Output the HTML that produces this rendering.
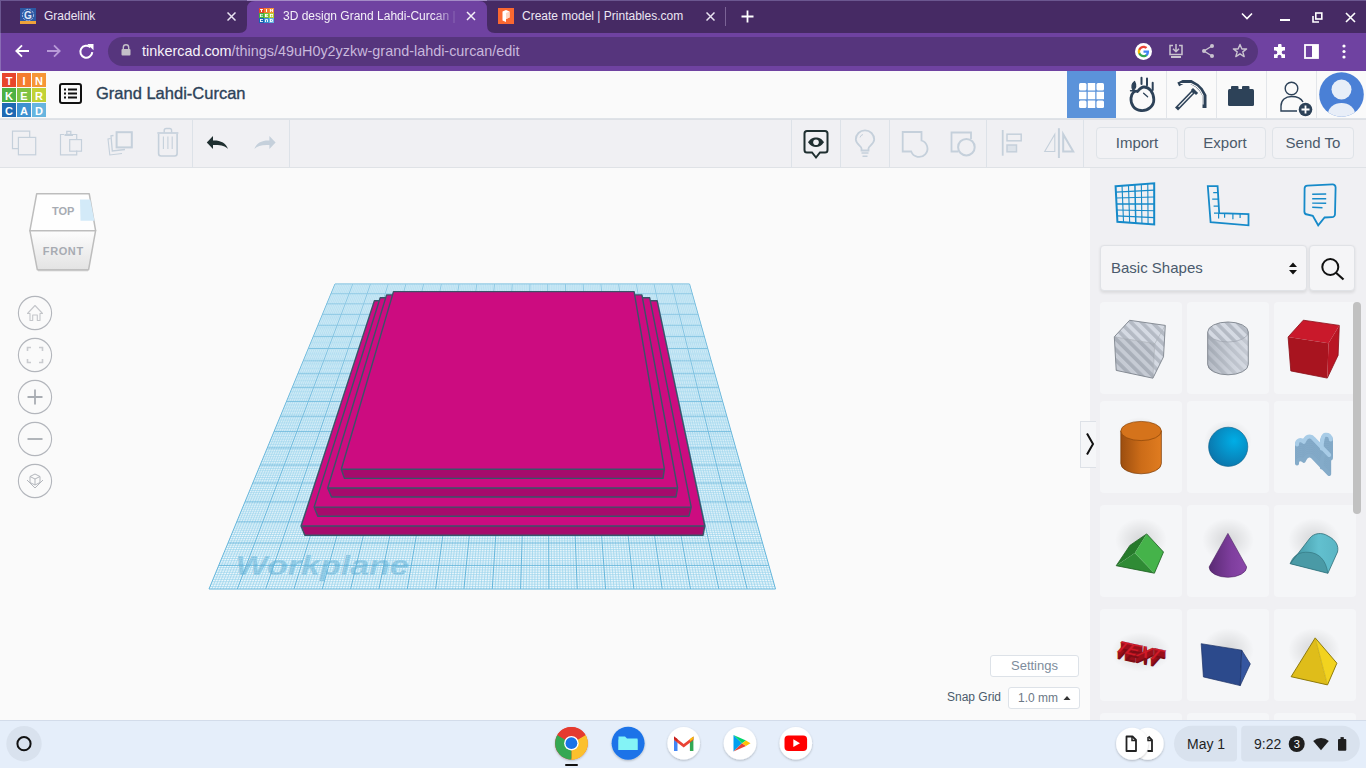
<!DOCTYPE html>
<html><head><meta charset="utf-8">
<style>
*{margin:0;padding:0;box-sizing:border-box}
html,body{width:1366px;height:768px;overflow:hidden;background:#fafafa;font-family:"Liberation Sans",sans-serif}
.a{position:absolute}
#tabs{left:0;top:0;width:1366px;height:33px;background:#462a64;border-top:1px solid #6e559a}
#tb{left:0;top:33px;width:1366px;height:38px;background:#6f42a1}
.tab{top:0;height:33px;color:#fff;font-size:12.5px}
.tabt{position:absolute;top:9px;white-space:nowrap;color:#f1ecf6}
.x{position:absolute;top:9px;width:14px;height:14px}
#omni{left:108px;top:37px;width:1150px;height:29px;border-radius:15px;background:#56357d}
#hdr{left:0;top:71px;width:1366px;height:48px;background:#fafafa}
#tool{left:0;top:119px;width:1366px;height:49px;background:#f0f0f3;border-top:1px solid #dde0e5;border-bottom:1px solid #dfe2e6}
#canvas{left:0;top:168px;width:1090px;height:552px;background:#fafafa}
#panel{left:1090px;top:168px;width:276px;height:552px;background:#f0f0f3}
#shelf{left:0;top:720px;width:1366px;height:48px;background:#e5eefa;border-top:1px solid #d3dcea}
.btn{width:82px;height:32px;border:1px solid #dfe3e8;border-radius:4px;background:#f2f2f5;color:#4b5a6b;font-size:15px;text-align:center;line-height:30px}
.card{width:82px;height:92px;background:#f5f6f8;border-radius:4px}
</style></head><body>

<div id="tabs" class="a"></div>
<svg class="a" style="left:0;top:0" width="1366" height="33">
<rect x="0" y="0" width="1366" height="1" fill="#6b5790"/>
<rect x="0" y="0" width="1" height="33" fill="#6b5790"/>
<path d="M239 33 Q247 33 247 25 L247 9 Q247 1 255 1 L479 1 Q487 1 487 9 L487 25 Q487 33 495 33 Z" fill="#6f42a1"/>
<rect x="247" y="0" width="240" height="1" fill="#a38bc6"/>
<rect x="725" y="7" width="1" height="19" fill="#7b6396"/>
</svg>
<!-- tab 1 -->
<svg class="a" style="left:20px;top:8px" width="16" height="16" viewBox="0 0 16 16">
<rect width="16" height="16" fill="#2c58a3"/><rect y="13" width="16" height="3" fill="#eea23a"/>
<circle cx="8" cy="7" r="5.6" fill="none" stroke="#a9c0ea" stroke-width="1" stroke-dasharray="2 1"/>
<text x="8" y="10.5" font-size="10" font-weight="bold" text-anchor="middle" fill="#dfe8f8" font-family="Liberation Sans">G</text>
</svg>
<div class="a tabt" style="left:44px;top:9px;font-size:12px;color:#ece6f3">Gradelink</div>
<svg class="a" style="left:227px;top:12px" width="9" height="9"><path d="M0.5 0.5L8.5 8.5M8.5 0.5L0.5 8.5" stroke="#e8e2f0" stroke-width="1.5"/></svg>
<!-- tab 2 -->
<svg class="a" style="left:259px;top:8px" width="15" height="15" viewBox="0 0 15 15">
<rect x="0" y="0" width="5" height="5" fill="#e8452c"/><rect x="5" y="0" width="5" height="5" fill="#f47c30"/><rect x="10" y="0" width="5" height="5" fill="#f59137"/>
<rect x="0" y="5" width="5" height="5" fill="#3fae3e"/><rect x="5" y="5" width="5" height="5" fill="#7cc03a"/><rect x="10" y="5" width="5" height="5" fill="#b5cf2e"/>
<rect x="0" y="10" width="5" height="5" fill="#1565b5"/><rect x="5" y="10" width="5" height="5" fill="#3a8fd0"/><rect x="10" y="10" width="5" height="5" fill="#62b3e0"/>
<g fill="#fff">
<rect x="1" y="1" width="3" height="0.9"/><rect x="2" y="1" width="1" height="3"/>
<rect x="7" y="1" width="1" height="3"/>
<rect x="11" y="1" width="0.9" height="3"/><rect x="13.1" y="1" width="0.9" height="3"/><rect x="11.5" y="1.8" width="1.6" height="0.9"/>
<rect x="1" y="6" width="0.9" height="3"/><rect x="2.4" y="6" width="1.2" height="1.2"/><rect x="2.4" y="7.8" width="1.2" height="1.2"/>
<rect x="6" y="6" width="3" height="0.8"/><rect x="6" y="6" width="0.9" height="3"/><rect x="6" y="7.2" width="2.4" height="0.7"/><rect x="6" y="8.2" width="3" height="0.8"/>
<rect x="11" y="6" width="0.9" height="3"/><rect x="11" y="6" width="2.6" height="0.8"/><rect x="13" y="6" width="0.9" height="1.6"/><rect x="12.6" y="7.8" width="1.2" height="1.2"/>
<rect x="1" y="11" width="3" height="0.8"/><rect x="1" y="11" width="0.9" height="3"/><rect x="1" y="13.2" width="3" height="0.8"/>
<rect x="6" y="11.5" width="0.9" height="2.5"/><rect x="8.1" y="11.5" width="0.9" height="2.5"/><rect x="6.5" y="11" width="2" height="0.8"/>
<rect x="11" y="11" width="0.9" height="3"/><rect x="11" y="11" width="2.4" height="0.8"/><rect x="11" y="13.2" width="2.4" height="0.8"/><rect x="13.1" y="11.6" width="0.9" height="1.8"/>
</g>
</svg>
<div class="a" style="left:283px;top:9px;width:176px;height:18px;overflow:hidden;font-size:12px;color:#f4f0f8;white-space:nowrap;-webkit-mask-image:linear-gradient(90deg,#000 150px,transparent 176px)">3D design Grand Lahdi-Curcan | Tinkercad</div>
<svg class="a" style="left:466px;top:11px" width="10" height="10"><path d="M1 1L9 9M9 1L1 9" stroke="#f4f0f8" stroke-width="1.5"/></svg>
<!-- tab 3 -->
<svg class="a" style="left:498px;top:8px" width="16" height="16" viewBox="0 0 16 16">
<rect width="16" height="16" fill="#fa6831"/>
<path d="M4.5 3.5 L8 2 L11.5 3.5 L11.5 9.5 L8 11 L8 14 L4.5 12.5 Z" fill="#fff"/>
<path d="M8 5 L11.5 3.5 L11.5 9.5 L8 11 Z" fill="#ffd5c0"/>
</svg>
<div class="a" style="left:522px;top:9px;font-size:12px;color:#ece6f3;white-space:nowrap">Create model | Printables.com</div>
<svg class="a" style="left:706px;top:12px" width="9" height="9"><path d="M0.5 0.5L8.5 8.5M8.5 0.5L0.5 8.5" stroke="#e8e2f0" stroke-width="1.5"/></svg>
<svg class="a" style="left:741px;top:10px" width="13" height="13"><path d="M6.5 0.5V12.5M0.5 6.5H12.5" stroke="#fff" stroke-width="1.8"/></svg>
<!-- window controls -->
<svg class="a" style="left:1241px;top:12px" width="12" height="8"><path d="M1 1.5L6 6.5L11 1.5" fill="none" stroke="#fff" stroke-width="1.6"/></svg>
<svg class="a" style="left:1280px;top:19px" width="11" height="3"><rect width="10" height="2" fill="#fff"/></svg>
<svg class="a" style="left:1312px;top:12px" width="11" height="11"><path d="M1 4V10H7" fill="none" stroke="#fff" stroke-width="1.6"/><rect x="3.8" y="1" width="6" height="6" fill="none" stroke="#fff" stroke-width="1.6"/></svg>
<svg class="a" style="left:1344.5px;top:11.5px" width="11" height="11"><path d="M1 1L10 10M10 1L1 10" stroke="#fff" stroke-width="1.6"/></svg>
<div id="tb" class="a"></div>
<div class="a" style="left:0;top:33px;width:1px;height:38px;background:#8a6cb5"></div>
<div id="omni" class="a"></div>
<!-- nav buttons -->
<svg class="a" style="left:14px;top:43px" width="16" height="16" viewBox="0 0 16 16"><path d="M15 8H2.5M8 2.3L2.3 8L8 13.7" fill="none" stroke="#fff" stroke-width="1.8"/></svg>
<svg class="a" style="left:46px;top:43px" width="16" height="16" viewBox="0 0 16 16"><path d="M1 8H13.5M8 2.3L13.7 8L8 13.7" fill="none" stroke="#b89ad8" stroke-width="1.8"/></svg>
<svg class="a" style="left:78px;top:43px" width="17" height="17" viewBox="0 0 17 17"><path d="M14.3 9.2A6 6 0 1 1 12.4 4.3" fill="none" stroke="#fff" stroke-width="2"/><path d="M9.2 1H15.5V7.3Z" fill="#fff"/></svg>
<svg class="a" style="left:121px;top:44px" width="10" height="12" viewBox="0 0 10 12"><path d="M2.3 5V3.5A2.7 2.7 0 0 1 7.7 3.5V5" fill="none" stroke="#c4c0c8" stroke-width="1.4"/><rect x="0.5" y="5" width="9" height="6.5" rx="1" fill="#c4c0c8"/></svg>
<div class="a" style="left:142px;top:42.7px;font-size:14.4px;white-space:nowrap;color:#c8b8dc"><span style="color:#f6f2fa">tinkercad.com</span>/things/49uH0y2yzkw-grand-lahdi-curcan/edit</div>
<!-- omnibox right icons -->
<svg class="a" style="left:1135px;top:43px" width="17" height="17" viewBox="0 0 17 17"><circle cx="8.5" cy="8.5" r="8.5" fill="#fff"/><g transform="translate(8.5,8.5) scale(1.35) translate(-8.5,-8.5)">
<path d="M12.6 8.6c0-.3 0-.6-.1-.9H8.5v1.7h2.3c-.1.5-.4 1-.9 1.3v1.1h1.4c.8-.8 1.3-1.9 1.3-3.2z" fill="#4285f4"/>
<path d="M8.5 12.8c1.2 0 2.1-.4 2.8-1l-1.4-1.1c-.4.3-.9.4-1.4.4-1.1 0-2.1-.8-2.4-1.8H4.7v1.1c.7 1.4 2.2 2.4 3.8 2.4z" fill="#34a853"/>
<path d="M6.1 9.3c-.1-.3-.1-.5-.1-.8s0-.5.1-.8V6.6H4.7c-.3.6-.5 1.2-.5 1.9s.2 1.3.5 1.9l1.4-1.1z" fill="#fbbc05"/>
<path d="M8.5 5.9c.6 0 1.2.2 1.6.6l1.2-1.2c-.8-.7-1.8-1.1-2.8-1.1-1.7 0-3.1 1-3.8 2.4l1.4 1.1c.3-1 1.3-1.8 2.4-1.8z" fill="#ea4335"/></g></svg>
<svg class="a" style="left:1168px;top:43px" width="16" height="16" viewBox="0 0 16 16"><path d="M5 2.5H2V11.5H14V2.5H11" fill="none" stroke="#c9c3cf" stroke-width="1.5"/><path d="M8 1V8.5M5 5.8L8 8.8L11 5.8" fill="none" stroke="#c9c3cf" stroke-width="1.5"/><rect x="3" y="13" width="10" height="2" fill="#c9c3cf"/></svg>
<svg class="a" style="left:1200px;top:43px" width="16" height="16" viewBox="0 0 16 16"><path d="M12 3L4 8L12 13" fill="none" stroke="#c9c3cf" stroke-width="1.4"/><circle cx="12" cy="3" r="2" fill="#c9c3cf"/><circle cx="4" cy="8" r="2" fill="#c9c3cf"/><circle cx="12" cy="13" r="2" fill="#c9c3cf"/></svg>
<svg class="a" style="left:1232px;top:43px" width="16" height="16" viewBox="0 0 16 16"><path d="M8 1.5L9.9 6H14.6L10.8 8.9L12.2 13.6L8 10.8L3.8 13.6L5.2 8.9L1.4 6H6.1Z" fill="none" stroke="#c9c3cf" stroke-width="1.4" stroke-linejoin="round"/></svg>
<svg class="a" style="left:1272px;top:44px" width="16" height="16" viewBox="0 0 16 16"><path d="M6 1.5a1.8 1.8 0 0 1 3.6 0V3H13V6.4H11.6a1.9 1.9 0 0 0 0 3.8H13V14H9.4V12.6a1.9 1.9 0 0 0-3.8 0V14H2V10.3H3.4a1.9 1.9 0 0 0 0-3.8H2V3H6Z" fill="#fff"/></svg>
<svg class="a" style="left:1304px;top:44px" width="16" height="15" viewBox="0 0 16 15"><rect x="1" y="1" width="13" height="13" fill="none" stroke="#fff" stroke-width="1.8"/><rect x="8" y="1" width="6" height="13" fill="#fff"/></svg>
<svg class="a" style="left:1342px;top:44px" width="4" height="15" viewBox="0 0 4 15"><circle cx="2" cy="2" r="1.6" fill="#fff"/><circle cx="2" cy="7.5" r="1.6" fill="#fff"/><circle cx="2" cy="13" r="1.6" fill="#fff"/></svg>

<div id="hdr" class="a"></div>
<!-- tinkercad logo -->
<svg class="a" style="left:2px;top:73px" width="44" height="44" viewBox="0 0 44 44" font-family="Liberation Sans" font-weight="bold" font-size="11" text-anchor="middle" fill="#fff">
<rect x="0" y="0" width="14" height="14" fill="#e8452c"/><rect x="15" y="0" width="14" height="14" fill="#f47c30"/><rect x="30" y="0" width="14" height="14" fill="#f69636"/>
<rect x="0" y="15" width="14" height="14" fill="#4cb144"/><rect x="15" y="15" width="14" height="14" fill="#7fc241"/><rect x="30" y="15" width="14" height="14" fill="#c2d236"/>
<rect x="0" y="30" width="14" height="14" fill="#1e69b3"/><rect x="15" y="30" width="14" height="14" fill="#3e91d0"/><rect x="30" y="30" width="14" height="14" fill="#67b5df"/>
<text x="7" y="11.5">T</text><text x="22" y="11.5">I</text><text x="37" y="11.5">N</text>
<text x="7" y="26.5">K</text><text x="22" y="26.5">E</text><text x="37" y="26.5">R</text>
<text x="7" y="41.5">C</text><text x="22" y="41.5">A</text><text x="37" y="41.5">D</text>
</svg>
<svg class="a" style="left:59px;top:83px" width="23" height="21" viewBox="0 0 23 21"><rect x="1" y="1" width="21" height="19" rx="2" fill="none" stroke="#111" stroke-width="2"/>
<rect x="5" y="5.5" width="2" height="2" fill="#111"/><rect x="9" y="5.5" width="9" height="2" fill="#111"/>
<rect x="5" y="9.5" width="2" height="2" fill="#111"/><rect x="9" y="9.5" width="9" height="2" fill="#111"/>
<rect x="5" y="13.5" width="2" height="2" fill="#111"/><rect x="9" y="13.5" width="9" height="2" fill="#111"/></svg>
<div class="a" style="left:96px;top:83.8px;font-size:16.5px;color:#2d4258;white-space:nowrap;-webkit-text-stroke:0.35px #2d4258">Grand Lahdi-Curcan</div>
<!-- header right icons -->
<div class="a" style="left:1067px;top:71px;width:49px;height:48px;background:#5b93da"></div>
<svg class="a" style="left:1079px;top:83px" width="25" height="25" viewBox="0 0 25 25" fill="#fff">
<rect x="0" y="0" width="7.5" height="7.5" rx="1.5"/><rect x="8.75" y="0" width="7.5" height="7.5"/><rect x="17.5" y="0" width="7.5" height="7.5" rx="1.5"/>
<rect x="0" y="8.75" width="7.5" height="7.5"/><rect x="8.75" y="8.75" width="7.5" height="7.5"/><rect x="17.5" y="8.75" width="7.5" height="7.5"/>
<rect x="0" y="17.5" width="7.5" height="7.5" rx="1.5"/><rect x="8.75" y="17.5" width="7.5" height="7.5"/><rect x="17.5" y="17.5" width="7.5" height="7.5" rx="1.5"/></svg>
<div class="a" style="left:1166px;top:71px;width:1px;height:48px;background:#e3e6ea"></div>
<div class="a" style="left:1216px;top:71px;width:1px;height:48px;background:#e3e6ea"></div>
<div class="a" style="left:1266px;top:71px;width:1px;height:48px;background:#e3e6ea"></div>
<div class="a" style="left:1316px;top:71px;width:1px;height:48px;background:#e3e6ea"></div>
<svg class="a" style="left:1066px;top:70px" width="150" height="48" viewBox="1066 70 150 48" fill="none" stroke="#2d4258" stroke-linecap="round" stroke-linejoin="round">
<path d="M1137.5 91.5C1135 90 1131.5 93 1131 98C1130.5 104 1134 110 1141 110.5C1148 111 1154 106 1153.8 99.5C1153.5 92 1149 87 1144 87C1141 87 1139.5 89 1137.5 91.5Z" stroke-width="2.8"/>
<path d="M1133.2 90.5C1131 87 1132 83.5 1134.6 81.5C1136.5 85 1136 88 1133.2 90.5Z" fill="#2d4258" stroke-width="1.2"/>
<path d="M1130.5 90.8H1137" stroke-width="1.4"/>
<path d="M1141.5 77.8V84M1147 78.5V85.2M1152.7 82.8V90" stroke-width="2"/>
<path d="M1143.6 93.2L1147.6 96.8" stroke-width="1.3"/>
<g stroke-linecap="square" stroke-linejoin="miter">
<path d="M1180 83.5L1183 82H1191L1197 85.5L1201 89.5L1204.5 95.5V106" stroke-width="4"/>
<path d="M1193 92L1178 107.5" stroke-width="4.2"/>
<path d="M1181 83.5H1191L1196.5 86.5L1200 90L1203 95.5V104" stroke="#fafafa" stroke-width="1.1"/>
<path d="M1192 93L1179 106.5" stroke="#fafafa" stroke-width="1.2"/>
<path d="M1193 90L1196 93" stroke-width="3"/>
</g>
</svg>
<svg class="a" style="left:1227px;top:85px" width="28" height="22" viewBox="0 0 28 22" fill="#2d4258">
<rect x="4" y="1" width="7.5" height="5" rx="1"/><rect x="15" y="1" width="7.5" height="5" rx="1"/><rect x="1" y="4" width="26" height="17" rx="1.5"/></svg>
<svg class="a" style="left:1280px;top:81px" width="34" height="37" viewBox="0 0 34 37" fill="none" stroke="#2d4258" stroke-width="1.4">
<circle cx="11.5" cy="7.5" r="6.3"/><path d="M23 21 C21 17 16.5 15.5 11.5 15.5 C5.5 15.5 1 19 1 25 V30 H17"/>
<circle cx="25.5" cy="28.5" r="6.8" fill="#2d4258" stroke="none"/><path d="M25.5 24.5V32.5M21.5 28.5H29.5" stroke="#fff" stroke-width="1.8"/></svg>
<svg class="a" style="left:1319px;top:72px" width="46" height="46" viewBox="0 0 46 46">
<defs><clipPath id="av"><circle cx="22.5" cy="22.5" r="22.3"/></clipPath></defs>
<circle cx="22.5" cy="22.5" r="22.3" fill="#4a80d6"/>
<g clip-path="url(#av)" fill="#e8eef8"><circle cx="22.5" cy="17.5" r="10"/><ellipse cx="22.5" cy="42" rx="13.5" ry="11"/></g></svg>
<div class="a" style="left:0;top:118px;width:1366px;height:1px;background:#dfe3e8"></div>

<div id="tool" class="a"></div>
<svg class="a" style="left:0;top:120px" width="1090" height="48" fill="none" stroke="#c5d0db" stroke-width="1.2">
<!-- copy -->
<path d="M18.4 28.6H12.5V11.2H29.7V17.4"/>
<rect x="18.4" y="17.4" width="17.3" height="17.4"/>
<!-- paste -->
<path d="M64 14.5H60.5V34.8H76.7V30.5M76.7 19.6V14.5H73"/>
<rect x="66.8" y="11.4" width="4" height="3" stroke-width="1.3"/><rect x="64.5" y="14" width="8.5" height="2" fill="#c5d0db" stroke="none"/>
<rect x="69.7" y="19.6" width="11.8" height="11.6"/>
<!-- duplicate -->
<rect x="116.6" y="12.2" width="15.2" height="15.2" stroke-width="2"/>
<path d="M113.5 15.5L111 15.8L112.3 31L125 29.5" stroke-width="1.3"/>
<path d="M110.6 18.5L108 19L109.8 35L122 33.5" stroke-width="1.1"/>
<!-- trash -->
<path d="M157.3 13H178.4" stroke-width="1.6"/><path d="M164.2 12.5V10.5A2 2 0 0 1 166.2 8.5H169.6A2 2 0 0 1 171.6 10.5V12.5" stroke-width="1.4"/>
<path d="M158.6 14V33.5A2.5 2.5 0 0 0 161.1 36H174.6A2.5 2.5 0 0 0 177.1 33.5V14" stroke-width="1.6"/>
<path d="M163.4 16.6V29M167.9 16.6V29M172.2 16.6V29" stroke-width="1.1"/>
<!-- separators -->
<path d="M192.5 0V48M289.5 0V48M791.5 0V48M840.5 0V48M889.5 0V48M986.5 0V48M1083.5 0V48" stroke="#dde2e8" stroke-width="1"/>
<!-- undo -->
<path d="M206.8 22.5L213 16V29Z" fill="#1f2f30" stroke="none"/>
<path d="M212 20.5C220 20 226 22.5 228 29C225 25.5 220 24.5 212 25Z" fill="#1f2f30" stroke="none"/>
<!-- redo -->
<path d="M275.6 22.5L269.4 16V29Z" fill="#c5d0db" stroke="none"/>
<path d="M270.4 20.5C262.4 20 256.4 22.5 254.4 29C257.4 25.5 262.4 24.5 270.4 25Z" fill="#c5d0db" stroke="none"/>
<!-- notes eye -->
<path d="M807 11H825A2.5 2.5 0 0 1 827.5 13.5V30A2.5 2.5 0 0 1 825 32.5H820L816 37.5L812 32.5H807A2.5 2.5 0 0 1 804.5 30V13.5A2.5 2.5 0 0 1 807 11Z" stroke="#1f2f30" stroke-width="2"/>
<path d="M808 22.3C810.5 18.5 813 17.5 816 17.5C819 17.5 821.5 18.5 824 22.3C821.5 26 819 27 816 27C813 27 810.5 26 808 22.3Z" fill="#1f2f30" stroke="none"/>
<circle cx="816" cy="22.3" r="2.8" fill="#f0f0f3" stroke="none"/>
<!-- bulb -->
<path d="M861.5 30.5V28.5C861.5 26 855.8 24 855.8 19.5A9.2 9.2 0 0 1 874.2 19.5C874.2 24 868.5 26 868.5 28.5V30.5Z" stroke-width="1.8"/>
<path d="M861.5 33H868.5M862.5 36.3H867.5" stroke-width="1.6"/>
<path d="M860 17.5A4 4 0 0 1 863 14.5" stroke-width="1"/>
<!-- group -->
<path d="M902.7 12H921.5V20.5A8.4 8.4 0 1 1 911.2 31.5H902.7Z" stroke-width="1.8"/>
<!-- subtract -->
<path d="M958.5 31.5H951.5V12.5H971V19" stroke-width="1.8"/>
<circle cx="966.4" cy="27.2" r="8.3" stroke-width="2"/>
<!-- align -->
<path d="M1002.7 10V35.7" stroke-width="1.8"/>
<rect x="1007" y="14.2" width="14.2" height="6.6" stroke-width="1.5"/>
<rect x="1007" y="25" width="9.5" height="6.8" fill="#dde3ea" stroke-width="1.5"/>
<!-- mirror -->
<path d="M1058.9 8.2V38" stroke-width="2"/>
<path d="M1054.8 14.2L1044.7 31.5H1054.8Z" stroke-width="1.1"/>
<path d="M1063.2 14.2L1073.2 31.5H1063.2Z" stroke-width="2"/>
</svg>
<div class="a btn" style="left:1096px;top:127px">Import</div>
<div class="a btn" style="left:1184px;top:127px">Export</div>
<div class="a btn" style="left:1272px;top:127px">Send To</div>

<div id="canvas" class="a"></div>
<svg class="a" style="left:0;top:0" width="1090" height="720">
<path d="M335 284L689.5 284L775.5 589L209 589Z" fill="#ecf7fc"/>
<text x="0" y="0" font-family="Liberation Sans" font-weight="bold" font-style="italic" font-size="27" fill="#74b6d8" fill-opacity="0.85" transform="translate(235.5,574.5) scale(1.26,1)">Workplane</text>
<path d="M336.77 284.00L211.83 589.00M334.61 284.96L689.77 284.96M338.55 284.00L214.66 589.00M334.21 285.92L690.04 285.92M340.32 284.00L217.50 589.00M333.81 286.88L690.31 286.88M342.09 284.00L220.33 589.00M333.41 287.85L690.58 287.85M343.86 284.00L223.16 589.00M333.01 288.82L690.86 288.82M345.63 284.00L225.99 589.00M332.61 289.79L691.13 289.79M347.41 284.00L228.83 589.00M332.20 290.77L691.41 290.77M349.18 284.00L231.66 589.00M331.80 291.75L691.69 291.75M350.95 284.00L234.49 589.00M331.39 292.74L691.96 292.74M354.50 284.00L240.16 589.00M330.57 294.72L692.52 294.72M356.27 284.00L242.99 589.00M330.16 295.71L692.80 295.71M358.04 284.00L245.82 589.00M329.75 296.72L693.09 296.72M359.81 284.00L248.66 589.00M329.33 297.72L693.37 297.72M361.59 284.00L251.49 589.00M328.92 298.73L693.65 298.73M363.36 284.00L254.32 589.00M328.50 299.74L693.94 299.74M365.13 284.00L257.15 589.00M328.08 300.76L694.22 300.76M366.90 284.00L259.99 589.00M327.66 301.78L694.51 301.78M368.68 284.00L262.82 589.00M327.23 302.80L694.80 302.80M372.22 284.00L268.48 589.00M326.38 304.86L695.38 304.86M374.00 284.00L271.31 589.00M325.95 305.90L695.67 305.90M375.77 284.00L274.15 589.00M325.52 306.94L695.97 306.94M377.54 284.00L276.98 589.00M325.09 307.98L696.26 307.98M379.31 284.00L279.81 589.00M324.66 309.03L696.56 309.03M381.08 284.00L282.65 589.00M324.23 310.08L696.85 310.08M382.86 284.00L285.48 589.00M323.79 311.14L697.15 311.14M384.63 284.00L288.31 589.00M323.35 312.20L697.45 312.20M386.40 284.00L291.14 589.00M322.91 313.26L697.75 313.26M389.95 284.00L296.81 589.00M322.03 315.41L698.36 315.41M391.72 284.00L299.64 589.00M321.58 316.48L698.66 316.48M393.49 284.00L302.47 589.00M321.13 317.56L698.96 317.56M395.26 284.00L305.31 589.00M320.69 318.65L699.27 318.65M397.04 284.00L308.14 589.00M320.23 319.74L699.58 319.74M398.81 284.00L310.97 589.00M319.78 320.84L699.89 320.84M400.58 284.00L313.80 589.00M319.33 321.94L700.20 321.94M402.36 284.00L316.63 589.00M318.87 323.04L700.51 323.04M404.13 284.00L319.47 589.00M318.41 324.15L700.82 324.15M407.67 284.00L325.13 589.00M317.49 326.38L701.45 326.38M409.44 284.00L327.96 589.00M317.03 327.50L701.77 327.50M411.22 284.00L330.80 589.00M316.56 328.63L702.08 328.63M412.99 284.00L333.63 589.00M316.10 329.76L702.40 329.76M414.76 284.00L336.46 589.00M315.63 330.89L702.72 330.89M416.53 284.00L339.30 589.00M315.16 332.03L703.04 332.03M418.31 284.00L342.13 589.00M314.68 333.18L703.37 333.18M420.08 284.00L344.96 589.00M314.21 334.33L703.69 334.33M421.85 284.00L347.79 589.00M313.73 335.48L704.02 335.48M425.40 284.00L353.46 589.00M312.77 337.80L704.67 337.80M427.17 284.00L356.29 589.00M312.29 338.97L705.00 338.97M428.94 284.00L359.12 589.00M311.81 340.15L705.33 340.15M430.72 284.00L361.95 589.00M311.32 341.32L705.66 341.32M432.49 284.00L364.79 589.00M310.83 342.51L706.00 342.51M434.26 284.00L367.62 589.00M310.34 343.70L706.33 343.70M436.03 284.00L370.45 589.00M309.85 344.89L706.67 344.89M437.81 284.00L373.29 589.00M309.35 346.09L707.01 346.09M439.58 284.00L376.12 589.00M308.85 347.29L707.35 347.29M443.12 284.00L381.78 589.00M307.85 349.71L708.03 349.71M444.89 284.00L384.61 589.00M307.35 350.93L708.37 350.93M446.67 284.00L387.45 589.00M306.84 352.16L708.72 352.16M448.44 284.00L390.28 589.00M306.34 353.38L709.06 353.38M450.21 284.00L393.11 589.00M305.83 354.62L709.41 354.62M451.99 284.00L395.95 589.00M305.31 355.86L709.76 355.86M453.76 284.00L398.78 589.00M304.80 357.10L710.11 357.10M455.53 284.00L401.61 589.00M304.28 358.35L710.47 358.35M457.30 284.00L404.44 589.00M303.76 359.61L710.82 359.61M460.85 284.00L410.11 589.00M302.72 362.14L711.53 362.14M462.62 284.00L412.94 589.00M302.20 363.41L711.89 363.41M464.39 284.00L415.77 589.00M301.67 364.69L712.25 364.69M466.16 284.00L418.61 589.00M301.14 365.97L712.61 365.97M467.94 284.00L421.44 589.00M300.61 367.26L712.98 367.26M469.71 284.00L424.27 589.00M300.07 368.55L713.34 368.55M471.48 284.00L427.10 589.00M299.53 369.85L713.71 369.85M473.25 284.00L429.94 589.00M298.99 371.16L714.08 371.16M475.03 284.00L432.77 589.00M298.45 372.47L714.44 372.47M478.57 284.00L438.43 589.00M297.36 375.11L715.19 375.11M480.35 284.00L441.26 589.00M296.81 376.44L715.56 376.44M482.12 284.00L444.10 589.00M296.26 377.77L715.94 377.77M483.89 284.00L446.93 589.00M295.71 379.11L716.32 379.11M485.66 284.00L449.76 589.00M295.15 380.46L716.70 380.46M487.44 284.00L452.60 589.00M294.59 381.81L717.08 381.81M489.21 284.00L455.43 589.00M294.03 383.17L717.46 383.17M490.98 284.00L458.26 589.00M293.47 384.53L717.85 384.53M492.75 284.00L461.09 589.00M292.90 385.90L718.23 385.90M496.30 284.00L466.76 589.00M291.76 388.66L719.01 388.66M498.07 284.00L469.59 589.00M291.19 390.05L719.40 390.05M499.84 284.00L472.42 589.00M290.61 391.45L719.80 391.45M501.62 284.00L475.25 589.00M290.03 392.85L720.19 392.85M503.39 284.00L478.09 589.00M289.45 394.26L720.59 394.26M505.16 284.00L480.92 589.00M288.87 395.67L720.99 395.67M506.93 284.00L483.75 589.00M288.28 397.09L721.39 397.09M508.70 284.00L486.58 589.00M287.69 398.52L721.79 398.52M510.48 284.00L489.42 589.00M287.10 399.96L722.20 399.96M514.02 284.00L495.08 589.00M285.90 402.84L723.01 402.84M515.80 284.00L497.92 589.00M285.30 404.30L723.42 404.30M517.57 284.00L500.75 589.00M284.70 405.76L723.83 405.76M519.34 284.00L503.58 589.00M284.09 407.23L724.25 407.23M521.11 284.00L506.41 589.00M283.48 408.70L724.66 408.70M522.88 284.00L509.25 589.00M282.87 410.18L725.08 410.18M524.66 284.00L512.08 589.00M282.26 411.67L725.50 411.67M526.43 284.00L514.91 589.00M281.64 413.17L725.92 413.17M528.20 284.00L517.74 589.00M281.02 414.67L726.34 414.67M531.75 284.00L523.41 589.00M279.77 417.70L727.20 417.70M533.52 284.00L526.24 589.00M279.14 419.22L727.63 419.22M535.29 284.00L529.07 589.00M278.51 420.75L728.06 420.75M537.06 284.00L531.90 589.00M277.87 422.29L728.49 422.29M538.84 284.00L534.74 589.00M277.23 423.83L728.93 423.83M540.61 284.00L537.57 589.00M276.59 425.39L729.37 425.39M542.38 284.00L540.40 589.00M275.95 426.95L729.81 426.95M544.15 284.00L543.23 589.00M275.30 428.52L730.25 428.52M545.93 284.00L546.07 589.00M274.65 430.09L730.69 430.09M549.47 284.00L551.73 589.00M273.34 433.27L731.59 433.27M551.25 284.00L554.57 589.00M272.68 434.86L732.04 434.86M553.02 284.00L557.40 589.00M272.01 436.47L732.49 436.47M554.79 284.00L560.23 589.00M271.35 438.08L732.95 438.08M556.56 284.00L563.06 589.00M270.68 439.71L733.40 439.71M558.34 284.00L565.89 589.00M270.00 441.34L733.86 441.34M560.11 284.00L568.73 589.00M269.33 442.97L734.33 442.97M561.88 284.00L571.56 589.00M268.65 444.62L734.79 444.62M563.65 284.00L574.39 589.00M267.96 446.27L735.26 446.27M567.20 284.00L580.06 589.00M266.59 449.61L736.20 449.61M568.97 284.00L582.89 589.00M265.89 451.29L736.67 451.29M570.74 284.00L585.72 589.00M265.19 452.97L737.14 452.97M572.51 284.00L588.56 589.00M264.49 454.67L737.62 454.67M574.29 284.00L591.39 589.00M263.79 456.37L738.10 456.37M576.06 284.00L594.22 589.00M263.08 458.09L738.59 458.09M577.83 284.00L597.05 589.00M262.37 459.81L739.07 459.81M579.61 284.00L599.88 589.00M261.66 461.54L739.56 461.54M581.38 284.00L602.72 589.00M260.94 463.28L740.05 463.28M584.92 284.00L608.38 589.00M259.49 466.78L741.04 466.78M586.69 284.00L611.22 589.00M258.76 468.54L741.54 468.54M588.47 284.00L614.05 589.00M258.03 470.32L742.04 470.32M590.24 284.00L616.88 589.00M257.29 472.10L742.54 472.10M592.01 284.00L619.71 589.00M256.55 473.90L743.04 473.90M593.78 284.00L622.55 589.00M255.81 475.70L743.55 475.70M595.56 284.00L625.38 589.00M255.06 477.51L744.06 477.51M597.33 284.00L628.21 589.00M254.31 479.33L744.58 479.33M599.10 284.00L631.04 589.00M253.55 481.16L745.09 481.16M602.65 284.00L636.71 589.00M252.03 484.85L746.13 484.85M604.42 284.00L639.54 589.00M251.26 486.71L746.66 486.71M606.19 284.00L642.37 589.00M250.49 488.57L747.18 488.57M607.97 284.00L645.20 589.00M249.71 490.45L747.71 490.45M609.74 284.00L648.04 589.00M248.93 492.34L748.25 492.34M611.51 284.00L650.87 589.00M248.15 494.24L748.78 494.24M613.28 284.00L653.70 589.00M247.36 496.15L749.32 496.15M615.06 284.00L656.53 589.00M246.57 498.07L749.86 498.07M616.83 284.00L659.37 589.00M245.77 500.00L750.40 500.00M620.37 284.00L665.03 589.00M244.16 503.88L751.50 503.88M622.14 284.00L667.87 589.00M243.35 505.84L752.05 505.84M623.92 284.00L670.70 589.00M242.54 507.81L752.61 507.81M625.69 284.00L673.53 589.00M241.72 509.79L753.17 509.79M627.46 284.00L676.36 589.00M240.90 511.79L753.73 511.79M629.24 284.00L679.19 589.00M240.07 513.79L754.29 513.79M631.01 284.00L682.03 589.00M239.24 515.80L754.86 515.80M632.78 284.00L684.86 589.00M238.40 517.83L755.43 517.83M634.55 284.00L687.69 589.00M237.56 519.86L756.01 519.86M638.10 284.00L693.36 589.00M235.87 523.97L757.16 523.97M639.87 284.00L696.19 589.00M235.01 526.04L757.75 526.04M641.64 284.00L699.02 589.00M234.15 528.12L758.33 528.12M643.41 284.00L701.86 589.00M233.29 530.21L758.92 530.21M645.19 284.00L704.69 589.00M232.42 532.31L759.52 532.31M646.96 284.00L707.52 589.00M231.54 534.43L760.11 534.43M648.73 284.00L710.35 589.00M230.67 536.56L760.71 536.56M650.50 284.00L713.18 589.00M229.78 538.70L761.32 538.70M652.28 284.00L716.02 589.00M228.89 540.85L761.92 540.85M655.82 284.00L721.68 589.00M227.10 545.19L763.15 545.19M657.60 284.00L724.51 589.00M226.20 547.37L763.76 547.37M659.37 284.00L727.35 589.00M225.29 549.58L764.38 549.58M661.14 284.00L730.18 589.00M224.37 551.79L765.01 551.79M662.91 284.00L733.01 589.00M223.45 554.01L765.64 554.01M664.68 284.00L735.85 589.00M222.53 556.25L766.27 556.25M666.46 284.00L738.68 589.00M221.60 558.50L766.90 558.50M668.23 284.00L741.51 589.00M220.66 560.77L767.54 560.77M670.00 284.00L744.34 589.00M219.72 563.05L768.18 563.05M673.55 284.00L750.01 589.00M217.82 567.64L769.48 567.64M675.32 284.00L752.84 589.00M216.87 569.96L770.13 569.96M677.09 284.00L755.67 589.00M215.90 572.29L770.79 572.29M678.87 284.00L758.50 589.00M214.93 574.64L771.45 574.64M680.64 284.00L761.34 589.00M213.96 576.99L772.11 576.99M682.41 284.00L764.17 589.00M212.98 579.37L772.78 579.37M684.18 284.00L767.00 589.00M211.99 581.75L773.46 581.75M685.95 284.00L769.83 589.00M211.00 584.15L774.13 584.15M687.73 284.00L772.67 589.00M210.00 586.57L774.81 586.57" stroke="#98d3eb" stroke-width="0.72" fill="none"/>
<path d="M335.00 284.00L209.00 589.00M335.00 284.00L689.50 284.00M352.73 284.00L237.32 589.00M330.98 293.72L692.24 293.72M370.45 284.00L265.65 589.00M326.81 303.83L695.09 303.83M388.18 284.00L293.98 589.00M322.47 314.33L698.05 314.33M405.90 284.00L322.30 589.00M317.95 325.26L701.13 325.26M423.62 284.00L350.62 589.00M313.25 336.64L704.34 336.64M441.35 284.00L378.95 589.00M308.35 348.50L707.69 348.50M459.07 284.00L407.27 589.00M303.24 360.87L711.17 360.87M476.80 284.00L435.60 589.00M297.91 373.78L714.82 373.78M494.52 284.00L463.93 589.00M292.33 387.28L718.62 387.28M512.25 284.00L492.25 589.00M286.50 401.40L722.60 401.40M529.98 284.00L520.58 589.00M280.39 416.18L726.77 416.18M547.70 284.00L548.90 589.00M273.99 431.67L731.14 431.67M565.42 284.00L577.23 589.00M267.28 447.94L735.72 447.94M583.15 284.00L605.55 589.00M260.22 465.02L740.54 465.02M600.88 284.00L633.88 589.00M252.79 483.00L745.61 483.00M618.60 284.00L662.20 589.00M244.97 501.93L750.95 501.93M636.33 284.00L690.52 589.00M236.72 521.91L756.58 521.91M654.05 284.00L718.85 589.00M228.00 543.01L762.53 543.01M671.77 284.00L747.17 589.00M218.78 565.34L768.83 565.34M689.50 284.00L775.50 589.00M209.00 589.00L775.50 589.00" stroke="#62b4da" stroke-width="1" fill="none"/>
<defs><linearGradient id="wpg" x1="0" y1="284" x2="0" y2="589" gradientUnits="userSpaceOnUse"><stop offset="0" stop-color="#fff" stop-opacity="0.28"/><stop offset="0.5" stop-color="#fff" stop-opacity="0.08"/><stop offset="1" stop-color="#fff" stop-opacity="0"/></linearGradient></defs><path d="M335 284L689.5 284L775.5 589L209 589Z" fill="url(#wpg)"/>

<path d="M301.1 526L704.8 526L703 535.3L304.8 535.3Z" fill="#a60b6c"/><path d="M374.4 300.7L657.1 300.7L704.8 526L301.1 526Z" fill="#cc0c80"/><path d="M374.4 300.7L657.1 300.7L704.8 526L301.1 526ZM301.1 526L704.8 526L703 535.3L304.8 535.3Z" fill="none" stroke="#3a5468" stroke-width="1.4" stroke-linejoin="round"/><path d="M314.1 507.1L691.2 507.1L689 516.2L317.8 516.2Z" fill="#a60b6c"/><path d="M380.2 297.8L649.7 297.8L691.2 507.1L314.1 507.1Z" fill="#cc0c80"/><path d="M380.2 297.8L649.7 297.8L691.2 507.1L314.1 507.1ZM314.1 507.1L691.2 507.1L689 516.2L317.8 516.2Z" fill="none" stroke="#3a5468" stroke-width="1.4" stroke-linejoin="round"/><path d="M327.7 488L677.6 488L676 497L331.5 497Z" fill="#a60b6c"/><path d="M386.6 294.9L641.9 294.9L677.6 488L327.7 488Z" fill="#cc0c80"/><path d="M386.6 294.9L641.9 294.9L677.6 488L327.7 488ZM327.7 488L677.6 488L676 497L331.5 497Z" fill="none" stroke="#3a5468" stroke-width="1.4" stroke-linejoin="round"/><path d="M341.3 469.2L664.4 469.2L663 478.4L344.4 478.4Z" fill="#a60b6c"/><path d="M393.5 291.6L634.1 291.6L664.4 469.2L341.3 469.2Z" fill="#cc0c80"/><path d="M393.5 291.6L634.1 291.6L664.4 469.2L341.3 469.2ZM341.3 469.2L664.4 469.2L663 478.4L344.4 478.4Z" fill="none" stroke="#3a5468" stroke-width="1.4" stroke-linejoin="round"/>
</svg>
<!-- view cube -->
<svg class="a" style="left:26px;top:190px" width="76" height="85" viewBox="26 190 76 85">
<defs><linearGradient id="fg" x1="0" y1="0" x2="0" y2="1"><stop offset="0" stop-color="#fdfdfd"/><stop offset="1" stop-color="#e3e3e3"/></linearGradient></defs>
<path d="M36.7 193.7H89.2L95.6 230.7H29.9Z" fill="#fefefe" stroke="#bdbdbd" stroke-width="1.5" stroke-linejoin="round"/>
<path d="M80 199.6H90.3L94.5 220.8H80.5Z" fill="#d3eaf8"/>
<path d="M29.9 230.7H95.6L88.6 269.7H37.3Z" fill="url(#fg)" stroke="#bdbdbd" stroke-width="1.5" stroke-linejoin="round"/>
<path d="M38 270.5H88" stroke="#c8c8c8" stroke-width="1.5"/>
<text x="63.2" y="214.8" font-family="Liberation Sans" font-weight="bold" font-size="11" fill="#a7abb2" text-anchor="middle">TOP</text>
<text x="63.3" y="254.8" font-family="Liberation Sans" font-weight="bold" font-size="11" fill="#a7abb2" text-anchor="middle" letter-spacing="0.6">FRONT</text>
</svg>
<!-- nav buttons -->
<svg class="a" style="left:0;top:280px" width="70" height="230" viewBox="0 280 70 230" fill="none" stroke="#b3b6bc" stroke-width="1.1">
<circle cx="35" cy="313" r="16.6"/><circle cx="35" cy="355" r="16.6"/><circle cx="35" cy="397" r="16.6"/><circle cx="35" cy="439" r="16.6"/><circle cx="35" cy="481" r="16.6"/>
<path d="M27.5 313.5L35 305.5L42.5 313.5H40V320.5H37.3V315H32.7V320.5H30V313.5Z" stroke="#c4c6ca" stroke-width="1.1" stroke-linejoin="round"/>
<path d="M27.5 351V347.5H31M39 347.5H42.5V351M42.5 359V362.5H39M31 362.5H27.5V359" stroke="#c9cbcf" stroke-width="1.6"/>
<path d="M35 389.5V404.5M27.5 397H42.5" stroke="#a9adb3" stroke-width="1.8"/>
<path d="M27.5 439H42.5" stroke="#a9adb3" stroke-width="1.8"/>
<path d="M35 474L40 476.5V482.5L35 485L30 482.5V476.5ZM30 476.5L35 479L40 476.5M35 479V485" stroke="#b3b6bc" stroke-width="1"/>
<path d="M27 480L35 488L43 480" stroke="#b3b6bc" stroke-width="1"/>
</svg>
<!-- settings -->
<div class="a" style="left:990px;top:655px;width:89px;height:22px;background:#fff;border:1px solid #dde2e8;border-radius:3px;font-size:13px;color:#7d8c9c;text-align:center;line-height:20px">Settings</div>
<div class="a" style="left:947px;top:690px;font-size:12px;color:#4b5b6c;white-space:nowrap">Snap Grid</div>
<div class="a" style="left:1008px;top:687px;width:72px;height:22px;background:#fff;border:1px solid #dde2e8;border-radius:3px;font-size:12px;color:#6b7886;line-height:20px;padding-left:9px">1.0 mm</div>
<svg class="a" style="left:1063px;top:695px" width="8" height="6"><path d="M0.5 5L4 1L7.5 5Z" fill="#333"/></svg>

<div id="panel" class="a"></div>
<svg class="a" style="left:1110px;top:178px" width="240" height="52" viewBox="1110 178 240 52" fill="none" stroke="#168ac9" stroke-width="1.6">
<path d="M1115.6 186.2L1154.2 183.3L1154.2 224.5L1117.4 221.8Z" stroke-width="2"/>
<path d="M1122.03 185.72L1123.53 222.25" stroke-width="1.1"/><path d="M1115.90 192.13L1154.20 190.17" stroke-width="1.1"/><path d="M1128.47 185.23L1129.67 222.70" stroke-width="1.1"/><path d="M1116.20 198.07L1154.20 197.03" stroke-width="1.1"/><path d="M1134.90 184.75L1135.80 223.15" stroke-width="1.5"/><path d="M1116.50 204.00L1154.20 203.90" stroke-width="1.5"/><path d="M1141.33 184.27L1141.93 223.60" stroke-width="1.1"/><path d="M1116.80 209.93L1154.20 210.77" stroke-width="1.1"/><path d="M1147.77 183.78L1148.07 224.05" stroke-width="1.1"/><path d="M1117.10 215.87L1154.20 217.63" stroke-width="1.1"/>
<path d="M1207.8 186.2H1217.6L1219.2 213.1L1248.5 214.1V225.3L1210.6 222.2Z" stroke-width="1.8"/>
<path d="M1213.2 192.6H1217.9M1212.2 199.2H1218.3M1213.6 206.2H1218.7M1214 213.2H1219.2M1218.6 213.2V218.5M1224.6 213.5V217.8M1232.9 213.8V219.3M1240.1 214V218" stroke-width="1.2"/>
<path d="M1307.5 185.6L1332.5 184.4A3 3 0 0 1 1335.6 187.4L1335 214A3 3 0 0 1 1332 217.2L1324.6 217.5L1318.2 225.3L1312.8 215.8L1307.3 214.5A3 3 0 0 1 1304.4 211.6L1304.6 188.6A3 3 0 0 1 1307.5 185.6Z" stroke-width="1.8"/>
<path d="M1312.2 194.3L1326.2 194M1312.2 198.8L1326.2 198.8M1312.2 203.1L1326.2 203.3M1312.2 207.3L1322.5 207.8" stroke-width="1.4"/>
</svg>
<div class="a" style="left:1100px;top:245px;width:207px;height:46px;background:#f5f5f7;border:1px solid #e0e2e6;border-radius:4px;box-shadow:0 1.5px 3px rgba(0,0,0,0.09)"></div>
<div class="a" style="left:1111px;top:259px;font-size:15px;color:#4a5a6d;white-space:nowrap">Basic Shapes</div>
<svg class="a" style="left:1288px;top:261px" width="10" height="15"><path d="M1 6L5 1.5L9 6Z M1 9L5 13.5L9 9Z" fill="#111"/></svg>
<div class="a" style="left:1309px;top:245px;width:46px;height:46px;background:#f5f5f7;border:1px solid #e0e2e6;border-radius:4px;box-shadow:0 1.5px 3px rgba(0,0,0,0.09)"></div>
<svg class="a" style="left:1318px;top:255px" width="28" height="28"><circle cx="12.3" cy="12" r="8" fill="none" stroke="#111" stroke-width="2"/><path d="M18 17.8L25.5 24.5" stroke="#111" stroke-width="2.2"/></svg>
<div class="a card" style="left:1100px;top:302px"></div>
<div class="a card" style="left:1187px;top:302px"></div>
<div class="a card" style="left:1274px;top:302px"></div>
<div class="a card" style="left:1100px;top:401px"></div>
<div class="a card" style="left:1187px;top:401px"></div>
<div class="a card" style="left:1274px;top:401px"></div>
<div class="a card" style="left:1100px;top:505px"></div>
<div class="a card" style="left:1187px;top:505px"></div>
<div class="a card" style="left:1274px;top:505px"></div>
<div class="a card" style="left:1100px;top:609px"></div>
<div class="a card" style="left:1187px;top:609px"></div>
<div class="a card" style="left:1274px;top:609px"></div>
<div class="a card" style="left:1100px;top:713px"></div>
<div class="a card" style="left:1187px;top:713px"></div>
<div class="a card" style="left:1274px;top:713px"></div>

<svg class="a" style="left:1090px;top:295px" width="276" height="425" viewBox="1090 295 276 425">
<defs>
<pattern id="stripe" patternUnits="userSpaceOnUse" width="7.5" height="7.5" patternTransform="rotate(-45)"><rect width="7.5" height="7.5" fill="#d5dae3"/><rect width="3.6" height="7.5" fill="#b4bac4"/></pattern>
<pattern id="stripe2" patternUnits="userSpaceOnUse" width="7.5" height="7.5" patternTransform="rotate(-45)"><rect width="7.5" height="7.5" fill="#c6cbd4"/><rect width="3.6" height="7.5" fill="#a9afb9"/></pattern>
<radialGradient id="sh"><stop offset="0" stop-color="#000" stop-opacity="0.13"/><stop offset="1" stop-color="#000" stop-opacity="0"/></radialGradient>
<linearGradient id="org" x1="0" x2="1"><stop offset="0" stop-color="#9c4e0f"/><stop offset="0.5" stop-color="#cc6c18"/><stop offset="1" stop-color="#e07c20"/></linearGradient>
<radialGradient id="blu" cx="0.65" cy="0.35" r="0.7"><stop offset="0" stop-color="#00aee6"/><stop offset="1" stop-color="#0b76ac"/></radialGradient>
<linearGradient id="pur" x1="0" x2="1"><stop offset="0" stop-color="#5a2a74"/><stop offset="0.6" stop-color="#7f3e9e"/><stop offset="1" stop-color="#8b47aa"/></linearGradient>
<linearGradient id="cyl" x1="0" x2="1"><stop offset="0" stop-color="#8d949e"/><stop offset="0.6" stop-color="#c5cad3"/><stop offset="1" stop-color="#d8dce4"/></linearGradient>
<linearGradient id="tea" x1="0" x2="1"><stop offset="0" stop-color="#3d8f9c"/><stop offset="0.6" stop-color="#62c0cf"/><stop offset="1" stop-color="#5ab5c4"/></linearGradient>
</defs>
<!-- shadows -->
<ellipse cx="1141" cy="540" rx="26" ry="22" fill="url(#sh)"/>
<ellipse cx="1228" cy="540" rx="26" ry="22" fill="url(#sh)"/>
<ellipse cx="1314" cy="540" rx="26" ry="22" fill="url(#sh)"/>
<ellipse cx="1141" cy="652" rx="30" ry="20" fill="url(#sh)"/>
<ellipse cx="1228" cy="650" rx="26" ry="22" fill="url(#sh)"/>
<ellipse cx="1314" cy="650" rx="26" ry="22" fill="url(#sh)"/>
<ellipse cx="1140" cy="432" rx="22" ry="15" fill="url(#sh)"/>
<ellipse cx="1228" cy="440" rx="24" ry="20" fill="url(#sh)"/>
<!-- hole box -->
<path d="M1114.3 336.8L1129.6 320.3L1165.3 325.4L1154.8 343.7Z" fill="url(#stripe)"/>
<path d="M1114.3 336.8L1154.8 343.7L1152.9 378.2L1116.2 370.4Z" fill="url(#stripe2)"/>
<path d="M1154.8 343.7L1165.3 325.4L1163.5 356.8L1152.9 378.2Z" fill="url(#stripe)"/>
<path d="M1114.3 336.8L1129.6 320.3L1165.3 325.4L1163.5 356.8L1152.9 378.2L1116.2 370.4Z" fill="none" stroke="#7d838c" stroke-width="0.9"/>
<path d="M1114.3 336.8L1154.8 343.7L1165.3 325.4M1154.8 343.7L1152.9 378.2" fill="none" stroke="#9aa0a9" stroke-width="0.5"/>
<!-- hole cylinder -->
<path d="M1207.7 332V364.5A20.3 10.3 0 0 0 1248.3 364.5V332Z" fill="url(#cyl)"/>
<path d="M1207.7 332V364.5A20.3 10.3 0 0 0 1248.3 364.5V332Z" fill="url(#stripe)" opacity="0.55"/>
<ellipse cx="1228" cy="332" rx="20.3" ry="10" fill="url(#stripe)"/>
<path d="M1207.7 332V364.5A20.3 10.3 0 0 0 1248.3 364.5V332A20.3 10 0 0 0 1207.7 332" fill="none" stroke="#7d838c" stroke-width="0.9"/>
<path d="M1207.7 332A20.3 10 0 0 0 1248.3 332" fill="none" stroke="#9aa0a9" stroke-width="0.6"/>
<!-- red box -->
<path d="M1288.1 337L1303.3 320.2L1339.3 325.4L1328.5 343.3Z" fill="#c9192b"/>
<path d="M1288.1 337L1328.5 343.3L1327.3 378.1L1290.8 370.9Z" fill="#a8141f"/>
<path d="M1328.5 343.3L1339.3 325.4L1338.1 355.3L1327.3 378.1Z" fill="#b91624"/>
<path d="M1288.1 337L1303.3 320.2L1339.3 325.4L1338.1 355.3L1327.3 378.1L1290.8 370.9Z" fill="none" stroke="#8a0d17" stroke-width="0.8"/>
<!-- orange cylinder -->
<path d="M1120.8 431V463.5A20.3 10.3 0 0 0 1161.4 463.5V431Z" fill="url(#org)" stroke="#7a3c08" stroke-width="0.7"/>
<ellipse cx="1141.1" cy="431" rx="20.3" ry="9.6" fill="#d5731b" stroke="#8a4509" stroke-width="0.7"/>
<!-- sphere -->
<circle cx="1228.2" cy="446.8" r="19.6" fill="url(#blu)" stroke="#0a5f8a" stroke-width="0.6"/>
<!-- scribble -->
<g fill="none" stroke-linecap="round" stroke-linejoin="round"><path d="M1297 444.5C1296.8 440 1300.5 438.8 1303.8 441.8C1306 436.5 1310.5 434.5 1313.8 439L1329.2 455M1321.8 448.5C1321.5 441 1323 435 1325.5 434.8C1328.5 434.5 1330.8 436 1330.8 439.5" stroke="#84abc9" stroke-width="4" transform="translate(0,1)"/><path d="M1297 444.5C1296.8 440 1300.5 438.8 1303.8 441.8C1306 436.5 1310.5 434.5 1313.8 439L1329.2 455M1321.8 448.5C1321.5 441 1323 435 1325.5 434.8C1328.5 434.5 1330.8 436 1330.8 439.5" stroke="#80a7c5" stroke-width="4" transform="translate(0,2)"/><path d="M1297 444.5C1296.8 440 1300.5 438.8 1303.8 441.8C1306 436.5 1310.5 434.5 1313.8 439L1329.2 455M1321.8 448.5C1321.5 441 1323 435 1325.5 434.8C1328.5 434.5 1330.8 436 1330.8 439.5" stroke="#84abc9" stroke-width="4" transform="translate(0,3)"/><path d="M1297 444.5C1296.8 440 1300.5 438.8 1303.8 441.8C1306 436.5 1310.5 434.5 1313.8 439L1329.2 455M1321.8 448.5C1321.5 441 1323 435 1325.5 434.8C1328.5 434.5 1330.8 436 1330.8 439.5" stroke="#80a7c5" stroke-width="4" transform="translate(0,4)"/><path d="M1297 444.5C1296.8 440 1300.5 438.8 1303.8 441.8C1306 436.5 1310.5 434.5 1313.8 439L1329.2 455M1321.8 448.5C1321.5 441 1323 435 1325.5 434.8C1328.5 434.5 1330.8 436 1330.8 439.5" stroke="#84abc9" stroke-width="4" transform="translate(0,5)"/><path d="M1297 444.5C1296.8 440 1300.5 438.8 1303.8 441.8C1306 436.5 1310.5 434.5 1313.8 439L1329.2 455M1321.8 448.5C1321.5 441 1323 435 1325.5 434.8C1328.5 434.5 1330.8 436 1330.8 439.5" stroke="#80a7c5" stroke-width="4" transform="translate(0,6)"/><path d="M1297 444.5C1296.8 440 1300.5 438.8 1303.8 441.8C1306 436.5 1310.5 434.5 1313.8 439L1329.2 455M1321.8 448.5C1321.5 441 1323 435 1325.5 434.8C1328.5 434.5 1330.8 436 1330.8 439.5" stroke="#84abc9" stroke-width="4" transform="translate(0,7)"/><path d="M1297 444.5C1296.8 440 1300.5 438.8 1303.8 441.8C1306 436.5 1310.5 434.5 1313.8 439L1329.2 455M1321.8 448.5C1321.5 441 1323 435 1325.5 434.8C1328.5 434.5 1330.8 436 1330.8 439.5" stroke="#80a7c5" stroke-width="4" transform="translate(0,8)"/><path d="M1297 444.5C1296.8 440 1300.5 438.8 1303.8 441.8C1306 436.5 1310.5 434.5 1313.8 439L1329.2 455M1321.8 448.5C1321.5 441 1323 435 1325.5 434.8C1328.5 434.5 1330.8 436 1330.8 439.5" stroke="#84abc9" stroke-width="4" transform="translate(0,9)"/><path d="M1297 444.5C1296.8 440 1300.5 438.8 1303.8 441.8C1306 436.5 1310.5 434.5 1313.8 439L1329.2 455M1321.8 448.5C1321.5 441 1323 435 1325.5 434.8C1328.5 434.5 1330.8 436 1330.8 439.5" stroke="#80a7c5" stroke-width="4" transform="translate(0,10)"/><path d="M1297 444.5C1296.8 440 1300.5 438.8 1303.8 441.8C1306 436.5 1310.5 434.5 1313.8 439L1329.2 455M1321.8 448.5C1321.5 441 1323 435 1325.5 434.8C1328.5 434.5 1330.8 436 1330.8 439.5" stroke="#84abc9" stroke-width="4" transform="translate(0,11)"/><path d="M1297 444.5C1296.8 440 1300.5 438.8 1303.8 441.8C1306 436.5 1310.5 434.5 1313.8 439L1329.2 455M1321.8 448.5C1321.5 441 1323 435 1325.5 434.8C1328.5 434.5 1330.8 436 1330.8 439.5" stroke="#80a7c5" stroke-width="4" transform="translate(0,12)"/><path d="M1297 444.5C1296.8 440 1300.5 438.8 1303.8 441.8C1306 436.5 1310.5 434.5 1313.8 439L1329.2 455M1321.8 448.5C1321.5 441 1323 435 1325.5 434.8C1328.5 434.5 1330.8 436 1330.8 439.5" stroke="#84abc9" stroke-width="4" transform="translate(0,13)"/><path d="M1297 444.5C1296.8 440 1300.5 438.8 1303.8 441.8C1306 436.5 1310.5 434.5 1313.8 439L1329.2 455M1321.8 448.5C1321.5 441 1323 435 1325.5 434.8C1328.5 434.5 1330.8 436 1330.8 439.5" stroke="#80a7c5" stroke-width="4" transform="translate(0,14)"/><path d="M1297 444.5C1296.8 440 1300.5 438.8 1303.8 441.8C1306 436.5 1310.5 434.5 1313.8 439L1329.2 455M1321.8 448.5C1321.5 441 1323 435 1325.5 434.8C1328.5 434.5 1330.8 436 1330.8 439.5" stroke="#84abc9" stroke-width="4" transform="translate(0,15)"/><path d="M1297 444.5C1296.8 440 1300.5 438.8 1303.8 441.8C1306 436.5 1310.5 434.5 1313.8 439L1329.2 455M1321.8 448.5C1321.5 441 1323 435 1325.5 434.8C1328.5 434.5 1330.8 436 1330.8 439.5" stroke="#80a7c5" stroke-width="4" transform="translate(0,16)"/><path d="M1297 444.5C1296.8 440 1300.5 438.8 1303.8 441.8C1306 436.5 1310.5 434.5 1313.8 439L1329.2 455M1321.8 448.5C1321.5 441 1323 435 1325.5 434.8C1328.5 434.5 1330.8 436 1330.8 439.5" stroke="#84abc9" stroke-width="4" transform="translate(0,17)"/><path d="M1297 444.5C1296.8 440 1300.5 438.8 1303.8 441.8C1306 436.5 1310.5 434.5 1313.8 439L1329.2 455M1321.8 448.5C1321.5 441 1323 435 1325.5 434.8C1328.5 434.5 1330.8 436 1330.8 439.5" stroke="#80a7c5" stroke-width="4" transform="translate(0,18)"/><path d="M1297 444.5C1296.8 440 1300.5 438.8 1303.8 441.8C1306 436.5 1310.5 434.5 1313.8 439L1329.2 455M1321.8 448.5C1321.5 441 1323 435 1325.5 434.8C1328.5 434.5 1330.8 436 1330.8 439.5" stroke="#84abc9" stroke-width="4" transform="translate(0,19)"/><path d="M1297 444.5C1296.8 440 1300.5 438.8 1303.8 441.8C1306 436.5 1310.5 434.5 1313.8 439L1329.2 455M1321.8 448.5C1321.5 441 1323 435 1325.5 434.8C1328.5 434.5 1330.8 436 1330.8 439.5" stroke="#a8cce7" stroke-width="4"/></g>
<!-- wedge -->
<path d="M1116.2 565.7L1129.9 545.4L1146.7 533.9L1134.8 552.9Z" fill="#267a2b"/>
<path d="M1116.2 565.7L1134.8 552.9L1154.4 573.2Z" fill="#2f8b35"/>
<path d="M1134.8 552.9L1146.7 533.9L1163.5 552L1154.4 573.2Z" fill="#45b34a"/>
<path d="M1116.2 565.7L1129.9 545.4L1146.7 533.9L1163.5 552L1154.4 573.2Z" fill="none" stroke="#1c5e20" stroke-width="0.8"/>
<!-- cone -->
<path d="M1227.9 533.4L1246.7 567A18.8 10.3 0 0 1 1209.1 567Z" fill="url(#pur)" stroke="#4a2060" stroke-width="0.6"/>
<!-- half cylinder -->
<path d="M1290.2 563.7L1310 538C1314 533 1322 532 1328 536C1336 540 1339 546 1337.5 552L1327.9 573.3Z" fill="url(#tea)"/>
<path d="M1290.2 563.7C1293 555 1300 551.5 1309 552.3C1319 553 1326 560 1327.9 573.3Z" fill="#4a9aa6"/>
<path d="M1290.2 563.7L1310 538C1314 533 1322 532 1328 536C1336 540 1339 546 1337.5 552L1327.9 573.3Z" fill="none" stroke="#2f6e78" stroke-width="0.8"/>
<path d="M1290.2 563.7C1293 555 1300 551.5 1309 552.3C1319 553 1326 560 1327.9 573.3" fill="none" stroke="#2f6e78" stroke-width="0.6"/>
<!-- text -->
<g transform="translate(0,1)"><text transform="translate(1113,651) rotate(12) skewX(-30) scale(0.93,0.82)" font-family="Liberation Sans" font-weight="bold" font-size="20" letter-spacing="-0.8" fill="#9a0f1a">TEXT</text></g><g transform="translate(0,2)"><text transform="translate(1113,651) rotate(12) skewX(-30) scale(0.93,0.82)" font-family="Liberation Sans" font-weight="bold" font-size="20" letter-spacing="-0.8" fill="#9a0f1a">TEXT</text></g><g transform="translate(0,3)"><text transform="translate(1113,651) rotate(12) skewX(-30) scale(0.93,0.82)" font-family="Liberation Sans" font-weight="bold" font-size="20" letter-spacing="-0.8" fill="#9a0f1a">TEXT</text></g><g transform="translate(0,4)"><text transform="translate(1113,651) rotate(12) skewX(-30) scale(0.93,0.82)" font-family="Liberation Sans" font-weight="bold" font-size="20" letter-spacing="-0.8" fill="#9a0f1a">TEXT</text></g><g transform="translate(0,5)"><text transform="translate(1113,651) rotate(12) skewX(-30) scale(0.93,0.82)" font-family="Liberation Sans" font-weight="bold" font-size="20" letter-spacing="-0.8" fill="#9a0f1a">TEXT</text></g><g transform="translate(0,6)"><text transform="translate(1113,651) rotate(12) skewX(-30) scale(0.93,0.82)" font-family="Liberation Sans" font-weight="bold" font-size="20" letter-spacing="-0.8" fill="#9a0f1a">TEXT</text></g><g transform="translate(0,7)"><text transform="translate(1113,651) rotate(12) skewX(-30) scale(0.93,0.82)" font-family="Liberation Sans" font-weight="bold" font-size="20" letter-spacing="-0.8" fill="#7d0c15">TEXT</text></g><text transform="translate(1113,651) rotate(12) skewX(-30) scale(0.93,0.82)" font-family="Liberation Sans" font-weight="bold" font-size="20" letter-spacing="-0.8" fill="#d11a28" stroke="#9a0f1a" stroke-width="0.4">TEXT</text>
<!-- blue prism -->
<path d="M1201.2 643.7L1241.7 650.2L1240.2 685.6L1203.4 676.9Z" fill="#2c4a8c" stroke="#1d3266" stroke-width="0.7"/>
<path d="M1241.7 650.2L1250.3 663.9L1240.2 685.6Z" fill="#3556a0" stroke="#1d3266" stroke-width="0.7"/>
<!-- pyramid -->
<path d="M1315.2 637.9L1291.1 676.7L1327.5 684.9Z" fill="#dfbd1a"/>
<path d="M1315.2 637.9L1336.9 663.2L1327.5 684.9Z" fill="#f2d31f"/>
<path d="M1315.2 637.9L1291.1 676.7L1327.5 684.9L1336.9 663.2Z" fill="none" stroke="#857000" stroke-width="0.9"/>
<path d="M1315.2 637.9L1327.5 684.9" stroke="#b59a00" stroke-width="0.5"/>
</svg>
<div class="a" style="left:1353px;top:302px;width:8px;height:212px;background:#c1c1c1;border-radius:4px"></div>
<div class="a" style="left:1080px;top:421px;width:16px;height:47px;background:#f5f6f8;border:1px solid #dde1e7;border-right:none"></div>
<svg class="a" style="left:1085px;top:432px" width="10" height="24"><path d="M2 1.5L8 12L2 22.5" fill="none" stroke="#111" stroke-width="2"/></svg>

<div id="shelf" class="a"></div>
<svg class="a" style="left:0;top:720px" width="1366" height="48" viewBox="0 720 1366 48">
<defs><filter id="ds" x="-30%" y="-30%" width="160%" height="170%"><feDropShadow dx="0" dy="1" stdDeviation="1" flood-color="#000" flood-opacity="0.25"/></filter></defs>
<circle cx="24" cy="743.7" r="17.7" fill="#d9e2ee"/>
<circle cx="24" cy="743.7" r="6.6" fill="none" stroke="#111" stroke-width="2"/>
<!-- chrome -->
<g filter="url(#ds)">
<circle cx="571.4" cy="743.2" r="16.3" fill="#e53a2f"/>
</g>
<path d="M571.4 743.2L585.5 735.05A16.3 16.3 0 0 1 571.4 759.5Z" fill="#fbc02d"/>
<path d="M571.4 743.2L571.4 759.5A16.3 16.3 0 0 1 557.3 735.05Z" fill="#34a853"/>
<path d="M571.4 743.2L557.3 735.05A16.3 16.3 0 0 1 585.5 735.05Z" fill="#e53a2f"/>
<path d="M578.5 743.2L585.5 735.05A16.3 16.3 0 0 1 571.4 759.5Z" fill="#fbc02d"/>
<circle cx="571.4" cy="743.2" r="7.3" fill="#fff"/>
<circle cx="571.4" cy="743.2" r="5.9" fill="#1a73e8"/>
<rect x="565" y="764" width="13" height="2" fill="#111" rx="1"/>
<!-- files -->
<g filter="url(#ds)"><circle cx="628.1" cy="743.2" r="16.5" fill="#1a73e8"/></g>
<path d="M618.5 736.5H625L627 738.5H637.5V750H618.5Z" fill="#7ef4f8"/>
<path d="M618.5 739.5H637.5V750H618.5Z" fill="#84f3f6"/>
<!-- gmail -->
<g filter="url(#ds)"><circle cx="683.7" cy="743.2" r="16.3" fill="#fff"/></g>
<path d="M674 736.5V751H677.5V741.5Z" fill="#4285f4"/>
<path d="M693.4 736.5V751H689.9V741.5Z" fill="#34a853"/>
<path d="M674 736.5L683.7 744L693.4 736.5V740L683.7 747.5L674 740Z" fill="#ea4335"/>
<path d="M674 736.5L677.5 739V741.5L674 739Z" fill="#c5221f"/>
<path d="M693.4 736.5L689.9 739V741.5L693.4 739Z" fill="#fbbc04"/>
<!-- play -->
<g filter="url(#ds)"><circle cx="740" cy="743.2" r="16.3" fill="#fff"/></g>
<path d="M733.5 735L742 743.2L733.5 751.4Z" fill="#00a0f0"/>
<path d="M733.5 735L746 740.5L742 743.2Z" fill="#00d46a"/>
<path d="M733.5 751.4L746 745.9L742 743.2Z" fill="#ea4335"/>
<path d="M746 740.5L750.5 743.2L746 745.9L742 743.2Z" fill="#ffc107"/>
<!-- youtube -->
<g filter="url(#ds)"><circle cx="795.8" cy="743.2" r="16.3" fill="#fff"/></g>
<rect x="784.5" y="735.5" width="22.6" height="15.4" rx="4" fill="#ff0000"/>
<path d="M793.3 739.3L800 743.2L793.3 747.1Z" fill="#fff"/>
<!-- tray -->
<g filter="url(#ds)"><circle cx="1147.7" cy="743.8" r="16" fill="#fff"/></g>
<g filter="url(#ds)"><circle cx="1132.1" cy="743.8" r="16" fill="#fff"/></g>
<path d="M1126.5 736.5H1132.5L1136 740V751H1126.5Z" fill="none" stroke="#222" stroke-width="1.8" stroke-linejoin="round"/>
<path d="M1132 736.5V740.5H1136" fill="none" stroke="#222" stroke-width="1.5"/>
<path d="M1148.5 736.5L1152 740V751H1147.5" fill="none" stroke="#222" stroke-width="1.8"/>
<path d="M1148 737V740.5H1151.5" fill="none" stroke="#222" stroke-width="1.5"/>
<path d="M1191.85 725.8H1233A4 4 0 0 1 1237 729.8V757.5A4 4 0 0 1 1233 761.5H1191.85A17.85 17.85 0 0 1 1191.85 725.8Z" fill="#d9e2ee"/>
<path d="M1245.2 725.8H1342A17.85 17.85 0 0 1 1342 761.5H1245.2A4 4 0 0 1 1241.2 757.5V729.8A4 4 0 0 1 1245.2 725.8Z" fill="#d9e2ee"/>
<circle cx="1296.7" cy="744" r="8" fill="#1f1f1f"/>
<text x="1296.7" y="748" font-family="Liberation Sans" font-size="11" fill="#fff" text-anchor="middle">3</text>
<path d="M1313.2 741A12 12 0 0 1 1328.8 741L1321 750.2Z" fill="#1f1f1f"/>
<rect x="1338" y="739" width="8.3" height="11.8" rx="1" fill="#1f1f1f"/><rect x="1340.5" y="737.1" width="3.3" height="2.5" fill="#1f1f1f"/>
</svg>
<div class="a" style="left:1187px;top:736px;font-size:14px;color:#1f1f1f;white-space:nowrap">May 1</div>
<div class="a" style="left:1254px;top:736px;font-size:14px;color:#1f1f1f;white-space:nowrap">9:22</div>

</body></html>
